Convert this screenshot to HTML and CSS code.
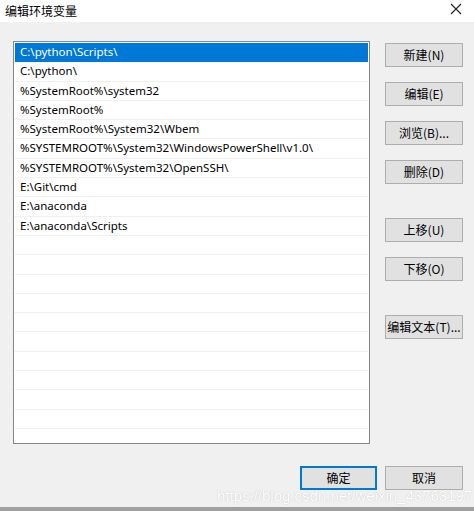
FILE: index.html
```html
<!DOCTYPE html>
<html lang="zh-CN">
<head>
<meta charset="utf-8">
<title>编辑环境变量</title>
<link rel="stylesheet" href="styles.css">
</head>
<body>
<div class="window">
  <div class="titlebar">
    <span class="title">编辑环境变量</span>
    <svg class="close" width="12" height="12" viewBox="0 0 12 12"><path d="M1 1 L11 11 M11 1 L1 11" stroke="#222" stroke-width="1.1" fill="none"/></svg>
  </div>
  <div class="content">
    <div class="main">
      <div class="listbox">
        <div class="row selected">C:\python\Scripts\</div>
        <div class="row">C:\python\</div>
        <div class="row">%SystemRoot%\system32</div>
        <div class="row">%SystemRoot%</div>
        <div class="row">%SystemRoot%\System32\Wbem</div>
        <div class="row">%SYSTEMROOT%\System32\WindowsPowerShell\v1.0\</div>
        <div class="row">%SYSTEMROOT%\System32\OpenSSH\</div>
        <div class="row">E:\Git\cmd</div>
        <div class="row">E:\anaconda</div>
        <div class="row">E:\anaconda\Scripts</div>
        <div class="row"></div>
        <div class="row"></div>
        <div class="row"></div>
        <div class="row"></div>
        <div class="row"></div>
        <div class="row"></div>
        <div class="row"></div>
        <div class="row"></div>
        <div class="row"></div>
        <div class="row"></div>
        <div class="row"></div>
        <div class="row"></div>
      </div>
      <div class="side">
        <button class="btn">新建(N)</button>
        <button class="btn">编辑(E)</button>
        <button class="btn">浏览(B)...</button>
        <button class="btn">删除(D)</button>
        <button class="btn gap-big">上移(U)</button>
        <button class="btn">下移(O)</button>
        <button class="btn gap-big">编辑文本(T)...</button>
      </div>
    </div>
    <div class="footer">
      <button class="btn primary">确定</button>
      <button class="btn">取消</button>
    </div>
  </div>
  <div class="bottombar"></div>
  <div class="watermark">https://blog.csdn.net/weixin_43763197</div>
</div>
</body>
</html>
```
FILE: styles.css
```css
* { box-sizing: border-box; }
html, body {
  margin: 0;
  padding: 0;
  width: 474px;
  height: 511px;
  overflow: hidden;
}
body {
  font-family: "Noto Sans", "Noto Sans CJK SC", sans-serif;
  font-size: 12px;
  color: #000;
  background: #f0f0f0;
}
.window {
  position: relative;
  width: 474px;
  height: 511px;
  display: flex;
  flex-direction: column;
}
.titlebar {
  height: 22px;
  background: #ffffff;
  display: flex;
  align-items: center;
  justify-content: space-between;
  padding: 0 12px 2px 5px;
}
.title {
  font-family: "Noto Sans CJK SC", sans-serif;
  font-size: 12px;
  color: #000;
}
.close { display: block; margin-top: -2px; }
.content {
  flex: 1;
  background: #f0f0f0;
  padding: 19px 11px 0 13px;
  display: flex;
  flex-direction: column;
}
.main {
  display: flex;
  gap: 15px;
}
.listbox {
  width: 357px;
  height: 403px;
  background: #fff;
  border: 1px solid #828790;
  padding: 1px 1px 0 1px;
  overflow: hidden;
}
.row {
  height: 19.3px;
  line-height: 18.5px;
  padding-left: 5px;
  border-bottom: 1px solid #f0f0f0;
  white-space: nowrap;
  font-family: "Noto Sans", "Noto Sans CJK SC", sans-serif;
  font-size: 11.5px;
  color: #000;
}
.row.selected {
  background: #0078d7;
  color: #fff;
  border-bottom-color: #0078d7;
}
.side {
  display: flex;
  flex-direction: column;
  gap: 15px;
  padding-top: 2px;
}
.btn {
  width: 78px;
  height: 24px;
  background: #e1e1e1;
  border: 1px solid #adadad;
  font-family: "Noto Sans CJK SC", sans-serif;
  font-size: 12px;
  line-height: 14px;
  color: #000;
  padding: 0;
  margin: 0;
}
.btn.gap-big { margin-top: 19px; }
.footer {
  display: flex;
  justify-content: flex-end;
  gap: 8px;
  margin-top: 22px;
}
.btn.primary {
  width: 77px;
  border: 2px solid #0078d7;
}
.bottombar {
  height: 4px;
  background: #a0a0a0;
  margin-top: auto;
}
.watermark {
  position: absolute;
  left: 217px;
  top: 488px;
  font-family: "Liberation Sans", sans-serif;
  font-size: 15px;
  line-height: 16px;
  color: #ffffff;
  text-shadow: 0 0 1px rgba(110,110,110,0.45);
  white-space: nowrap;
}
```
